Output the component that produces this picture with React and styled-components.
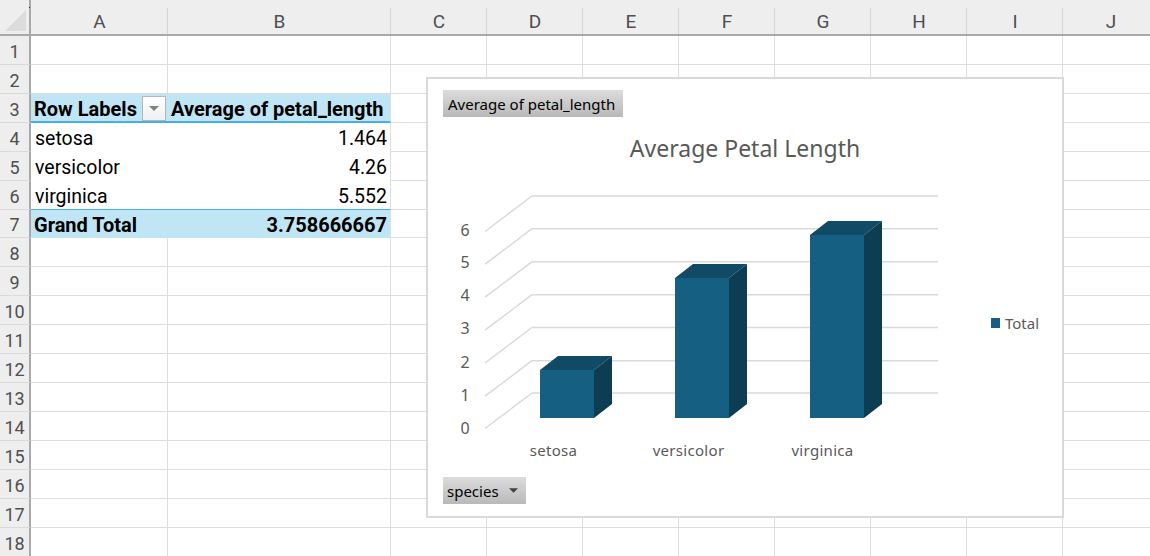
import React from "react"
import styled, { createGlobalStyle } from "styled-components"

const GlobalStyle = createGlobalStyle`
  html, body {
    margin: 0;
    padding: 0;
    background: #fff;
    overflow: hidden;
  }
`

const COLUMNS = ["A", "B", "C", "D", "E", "F", "G", "H", "I", "J"]
const ROWS = Array.from({ length: 18 }, (_, i) => i + 1)

const PIVOT = {
  3: { a: "Row Labels", b: "Average of petal_length", tone: "head" },
  4: { a: "setosa", b: "1.464", tone: "body" },
  5: { a: "versicolor", b: "4.26", tone: "body" },
  6: { a: "virginica", b: "5.552", tone: "body" },
  7: { a: "Grand Total", b: "3.758666667", tone: "total" },
}

const BARS = [
  { name: "setosa", x: 540, top: 370, labelX: 553.5 },
  { name: "versicolor", x: 675, top: 278, labelX: 688.5 },
  { name: "virginica", x: 810, top: 235, labelX: 822.5 },
]

const GRID_Y = [393, 360.7, 327.5, 294.7, 261.7, 228.7, 196]
const TICK_Y = [428, 395, 362, 328, 295, 262, 230]

const Sheet = styled.div`
  position: relative;
  width: 1150px;
  height: 556px;
  overflow: hidden;
  display: grid;
  grid-template-columns: 31px 137px 223px repeat(8, 96px);
  grid-template-rows: 36px;
  grid-auto-rows: 28.93px;
  font-family: "Roboto", "Liberation Sans", sans-serif;
  color: #000;
`
const Corner = styled.div`
  position: relative;
  background: #eeeeee;
  border-bottom: 2px solid #a9a9a9;
  border-right: 2px solid #a9a9a9;
  box-sizing: border-box;

  &::before {
    content: "";
    position: absolute;
    right: 3px;
    bottom: 3px;
    border-style: solid;
    border-width: 0 0 21px 21px;
    border-color: transparent transparent #dcdcdc transparent;
  }
  &::after {
    content: "";
    position: absolute;
    left: 29px;
    top: 7px;
    width: 1px;
    height: 1px;
    background: #222;
  }
`
const ColumnHead = styled.div`
  display: flex;
  align-items: center;
  justify-content: center;
  box-sizing: border-box;
  padding-top: 9px;
  background: linear-gradient(#d6d6d6, #d6d6d6) right 8px / 1px 100% no-repeat #eeeeee;
  border-bottom: 2px solid #a9a9a9;
  font-size: 19px;
  color: #4f4f4f;
`
const RowHead = styled.div`
  display: flex;
  align-items: center;
  justify-content: center;
  box-sizing: border-box;
  padding-top: 3px;
  background: #eeeeee;
  border-right: 2px solid #a9a9a9;
  border-bottom: 1px solid #dadada;
  font-size: 18px;
  color: #4f4f4f;
`
const Cell = styled.div`
  display: flex;
  align-items: center;
  justify-content: ${(p) => (p.$right ? "flex-end" : "space-between")};
  box-sizing: border-box;
  padding: 3px 3px 0 ${(p) => (p.$tone === "body" ? 4 : 3)}px;
  white-space: nowrap;
  font-size: ${(p) => (p.$tone === "head" || p.$tone === "total" ? 20 : 19.5)}px;
  font-weight: ${(p) => (p.$tone === "head" || p.$tone === "total" ? 700 : 400)};
  background: ${(p) => (p.$tone === "head" || p.$tone === "total" ? "#c0e6f5" : "#fff")};
  border-right: ${(p) => (p.$tone && !p.$outer ? "none" : "1px solid #dedede")};
  border-bottom: ${(p) =>
    p.$tone === "head"
      ? "2px solid #45b0e1"
      : p.$tone === "body" && p.$last
      ? "1px solid #45b0e1"
      : p.$tone
      ? "none"
      : "1px solid #dedede"};
`
const FilterButton = styled.span`
  display: flex;
  align-items: center;
  justify-content: center;
  flex: none;
  align-self: flex-end;
  width: 24px;
  height: 25px;
  margin-right: -1px;
  box-sizing: border-box;
  background: linear-gradient(#ffffff, #eef0f2);
  border: 1px solid #b5b5b5;

  &::after {
    content: "";
    border-style: solid;
    border-width: 5px 5px 0 5px;
    border-color: #808080 transparent transparent transparent;
  }
`

const Chart = styled.div`
  position: absolute;
  left: 426px;
  top: 77px;
  width: 638px;
  height: 441px;
  box-sizing: border-box;
  padding: 11px 15px 12px;
  display: flex;
  flex-direction: column;
  align-items: flex-start;
  background: #fff;
  border: 2px solid #d9d9d9;
  font-family: "Noto Sans", "Liberation Sans", sans-serif;
`
const FieldButton = styled.div`
  display: flex;
  align-items: center;
  gap: 10px;
  height: 27px;
  padding: 0 8px 0 ${(p) => p.$pad || 5}px;
  box-sizing: border-box;
  background: linear-gradient(#dcdcdc, #b9b9b9);
  font-size: 15px;
  color: #000;
  white-space: nowrap;

  svg {
    display: block;
  }
`
const Title = styled.div`
  align-self: center;
  margin-top: 15px;
  height: 32px;
  line-height: 32px;
  font-size: 23px;
  color: #595959;
  white-space: nowrap;
`
const PlotRow = styled.div`
  display: flex;
  align-items: flex-start;
  gap: 8px;
  margin-top: 26px;
  margin-bottom: 12px;
`
const Plot = styled.svg`
  display: block;
  width: 540px;
  height: 275px;

  text {
    font-family: "Noto Sans", "Liberation Sans", sans-serif;
    fill: #595959;
  }
`
const Legend = styled.div`
  display: flex;
  align-items: center;
  gap: 5px;
  margin-top: 123px;
  font-size: 15px;
  color: #595959;
`
const Swatch = styled.span`
  width: 9px;
  height: 10px;
  background: #156082;
`
const CategoryLabel = styled.text`
  font-size: 15px;
  letter-spacing: 0.3px;
`
const TickLabel = styled.text`
  font-size: 16px;
`

const Bar = ({ x, top }) => {
  const w = 54
  const bottom = 418
  const dx = 18
  const dy = 14
  return (
    <g>
      <polygon
        points={`${x},${top} ${x + dx},${top - dy} ${x + w + dx},${top - dy} ${x + w},${top}`}
        fill="#114a64"
      />
      <polygon
        points={`${x + w},${top} ${x + w + dx},${top - dy} ${x + w + dx},${bottom - dy} ${x + w},${bottom}`}
        fill="#0d3d52"
      />
      <rect x={x} y={top} width={w} height={bottom - top} fill="#156082" />
    </g>
  )
}

const PlotArea = () => (
  <Plot viewBox="443 190 540 275">
    {GRID_Y.map((y) => (
      <g key={y} stroke="#d9d9d9" strokeWidth="1.5" fill="none">
        <line x1="485" y1={y + 35.5} x2="532" y2={y} />
        <line x1="532" y1={y} x2="938" y2={y} />
      </g>
    ))}
    {TICK_Y.map((y, i) => (
      <TickLabel key={y} x="465" y={y} textAnchor="middle" dominantBaseline="central">
        {i}
      </TickLabel>
    ))}
    {BARS.map((bar) => (
      <Bar key={bar.name} x={bar.x} top={bar.top} />
    ))}
    {BARS.map((bar) => (
      <CategoryLabel key={bar.name} x={bar.labelX} y="450" textAnchor="middle" dominantBaseline="central">
        {bar.name}
      </CategoryLabel>
    ))}
  </Plot>
)

const App = () => (
  <>
    <GlobalStyle />
    <Sheet>
      <Corner />
      {COLUMNS.map((col) => (
        <ColumnHead key={col}>{col}</ColumnHead>
      ))}
      {ROWS.map((row) => {
        const pivot = PIVOT[row]
        return (
          <React.Fragment key={row}>
            <RowHead>{row}</RowHead>
            <Cell $tone={pivot?.tone} $last={row === 6}>
              {pivot?.a}
              {row === 3 && <FilterButton />}
            </Cell>
            <Cell $tone={pivot?.tone} $last={row === 6} $outer $right={row !== 3}>
              {pivot?.b}
            </Cell>
            {COLUMNS.slice(2).map((col) => (
              <Cell key={col} />
            ))}
          </React.Fragment>
        )
      })}
      <Chart>
        <FieldButton>Average of petal_length</FieldButton>
        <Title>Average Petal Length</Title>
        <PlotRow>
          <PlotArea />
          <Legend>
            <Swatch />
            Total
          </Legend>
        </PlotRow>
        <FieldButton $pad={4}>
          species
          <svg width="9" height="5" viewBox="0 0 10 5">
            <polygon points="0,0 10,0 5,5" fill="#404040" />
          </svg>
        </FieldButton>
      </Chart>
    </Sheet>
  </>
)

export default App
